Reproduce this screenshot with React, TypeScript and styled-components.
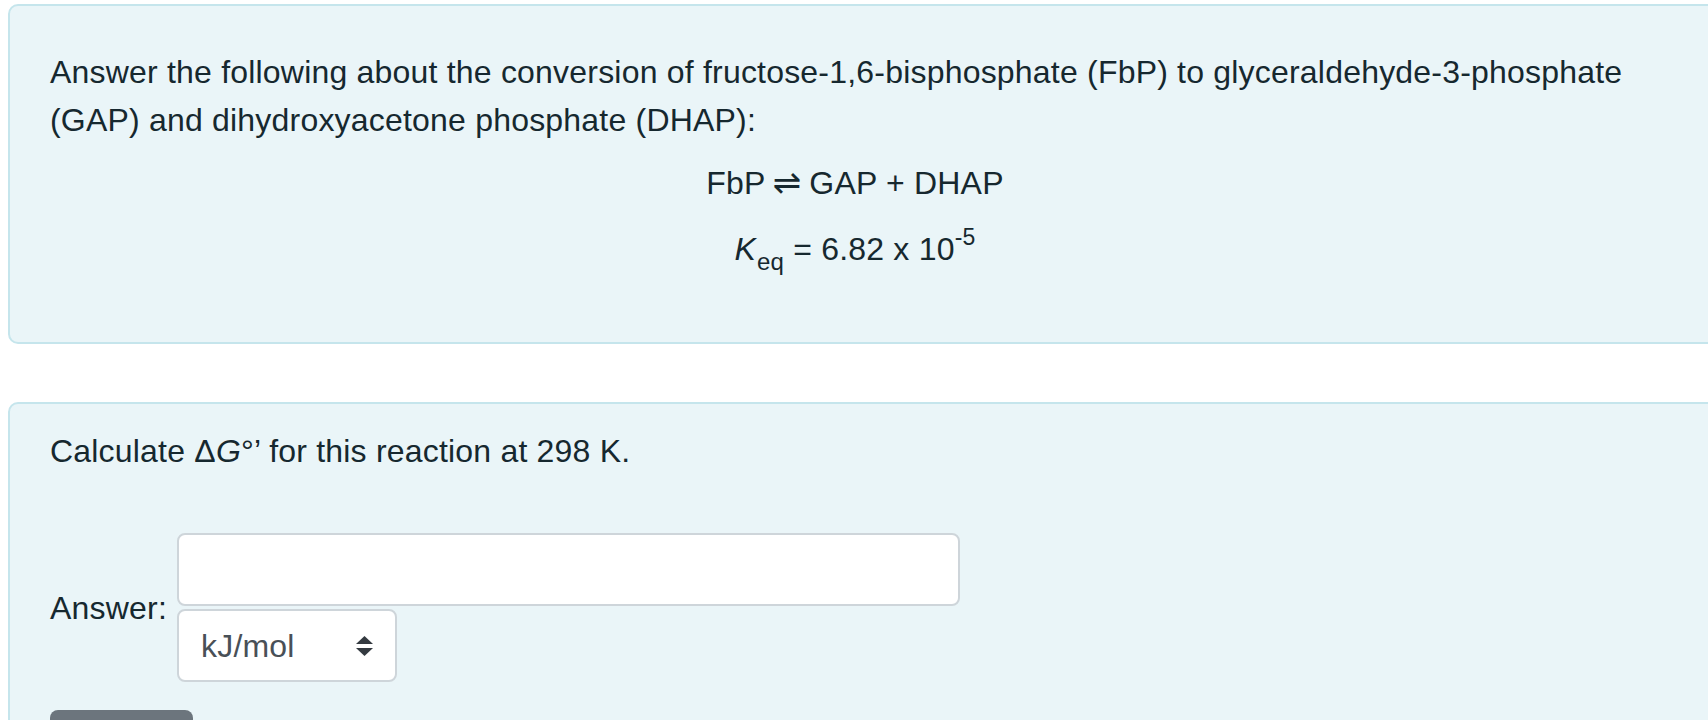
import styled, { createGlobalStyle } from 'styled-components';

const GlobalStyle = createGlobalStyle`
  html, body {
    margin: 0;
    padding: 0;
    background: #ffffff;
    overflow: hidden;
  }
  body {
    font-family: 'Liberation Sans', Arial, Helvetica, sans-serif;
    color: #16282f;
  }
`;

const Page = styled.div`
  padding: 4px 0 0 8px;
  width: 1760px;
`;

const Panel = styled.section<{ $pt: number; $pb: number }>`
  background: #eaf5f8;
  border: 2px solid #c5e5ec;
  border-radius: 10px;
  padding: ${(p) => p.$pt}px 0 ${(p) => p.$pb}px 40px;
  & + & {
    margin-top: 58px;
  }
`;

const Content = styled.div`
  width: 1610px;
  font-size: 32px;
  line-height: 48px;
  letter-spacing: 0.2px;
`;

const Text = styled.p`
  margin: 0;
`;

const Equation = styled.p<{ $mt: number }>`
  margin: ${(p) => p.$mt}px 0 0;
  text-align: center;
`;

const Arrow = styled.span`
  font-family: 'DejaVu Sans', sans-serif;
  font-size: 34px;
  margin: 0 8px 0 7px;
`;

const Sub = styled.sub`
  font-size: 24px;
  line-height: 0;
  vertical-align: -10px;
  margin-left: 1px;
`;

const Sup = styled.sup`
  font-size: 23px;
  line-height: 0;
  vertical-align: 15px;
`;

const AnswerRow = styled.div`
  display: flex;
  align-items: center;
  gap: 10px;
  margin-top: 58px;
`;

const Label = styled.label`
  font-size: 32px;
  line-height: 48px;
`;

const Fields = styled.div`
  display: flex;
  flex-direction: column;
  gap: 3px;
`;

const Input = styled.input`
  box-sizing: border-box;
  width: 783px;
  height: 73px;
  border: 2px solid #ced5da;
  border-radius: 8px;
  background: #ffffff;
  font-family: inherit;
  font-size: 32px;
  padding: 0 22px;
  outline: none;
`;

const SelectWrap = styled.div`
  position: relative;
  width: 220px;
  height: 73px;
`;

const Select = styled.select`
  appearance: none;
  box-sizing: border-box;
  width: 100%;
  height: 100%;
  border: 2px solid #ced5da;
  border-radius: 8px;
  background: #ffffff;
  color: #495057;
  font-family: 'Liberation Sans', Arial, sans-serif;
  font-size: 32px;
  letter-spacing: 0.2px;
  padding: 0 22px;
  outline: none;
`;

const Caret = styled.svg`
  position: absolute;
  left: 179px;
  top: 27px;
  pointer-events: none;
`;

const Button = styled.button`
  display: block;
  margin-top: 28px;
  width: 143px;
  height: 76px;
  border: none;
  border-radius: 8px;
  background: #6c757d;
  color: #ffffff;
  font-family: inherit;
  font-size: 32px;
`;

export default function App() {
  return (
    <>
      <GlobalStyle />
      <Page>
        <Panel $pt={42} $pb={69}>
          <Content>
            <Text>
              Answer the following about the conversion of fructose-1,6-bisphosphate (FbP) to
              glyceraldehyde-3-phosphate (GAP) and dihydroxyacetone phosphate (DHAP):
            </Text>
            <Equation $mt={14}>
              FbP<Arrow>⇌</Arrow>GAP + DHAP
            </Equation>
            <Equation $mt={18}>
              <i>K</i>
              <Sub>eq</Sub> = 6.82 x 10<Sup>-5</Sup>
            </Equation>
          </Content>
        </Panel>
        <Panel $pt={23} $pb={40}>
          <Content>
            <Text>
              Calculate Δ<i>G</i>°’ for this reaction at 298 K.
            </Text>
            <AnswerRow>
              <Label htmlFor="answer">Answer:</Label>
              <Fields>
                <Input id="answer" type="text" />
                <SelectWrap>
                  <Select defaultValue="kJ/mol">
                    <option>kJ/mol</option>
                    <option>J/mol</option>
                  </Select>
                  <Caret width="17" height="20" viewBox="0 0 17 20">
                    <path d="M8.5 0 L17 8 H0 Z M0 12 H17 L8.5 20 Z" fill="#343a40" />
                  </Caret>
                </SelectWrap>
              </Fields>
            </AnswerRow>
            <Button>Submit</Button>
          </Content>
        </Panel>
      </Page>
    </>
  );
}
